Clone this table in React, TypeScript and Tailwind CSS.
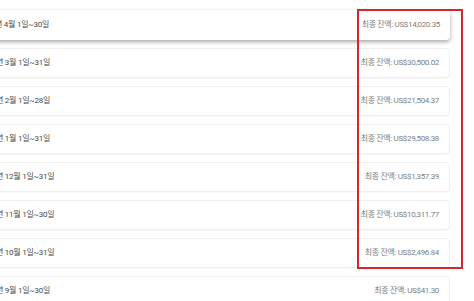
import React from 'react'

interface Statement {
  period: string
  balance: string
}

const statements: Statement[] = [
  { period: '2024년 4월 1일~30일', balance: 'US$14,020.35' },
  { period: '2024년 3월 1일~31일', balance: 'US$30,500.02' },
  { period: '2024년 2월 1일~28일', balance: 'US$21,504.37' },
  { period: '2024년 1월 1일~31일', balance: 'US$29,508.38' },
  { period: '2023년 12월 1일~31일', balance: 'US$1,357.39' },
  { period: '2023년 11월 1일~30일', balance: 'US$10,311.77' },
  { period: '2023년 10월 1일~31일', balance: 'US$2,496.84' },
  { period: '2023년 9월 1일~30일', balance: 'US$41.30' },
]

export default function App() {
  return (
    <div
      className="relative w-[474px] h-[301px] overflow-hidden bg-white"
      style={{ fontFamily: 'Roboto, "Noto Sans CJK KR", sans-serif' }}
    >
      <div className="flex flex-col gap-[8px] pt-[10px] ml-[-38px] w-[488px]">
        {statements.map((s, i) => (
          <div
            key={s.period}
            className={
              i === 0
                ? 'flex items-center justify-between h-[30px] pl-[16px] pr-[10px] bg-white rounded-[4px] shadow-[0_2px_4px_rgba(0,0,0,0.35)]'
                : 'flex items-center justify-between h-[30px] pl-[16px] pr-[10px] bg-white rounded-[4px] border border-[#f0f0f0] shadow-[0_1px_1px_rgba(0,0,0,0.03)]'
            }
          >
            <span className="text-[8px] text-[#4a4a4a] tracking-[-0.25px]">{s.period}</span>
            <span className="text-[8px] text-[#808080] tracking-[-0.35px]">최종 잔액: {s.balance}</span>
          </div>
        ))}
      </div>
      {/* highlight box */}
      <div className="absolute left-[357px] top-[9px] w-[106px] h-[260px] border-2 border-[#d8262b]" />
    </div>
  )
}
